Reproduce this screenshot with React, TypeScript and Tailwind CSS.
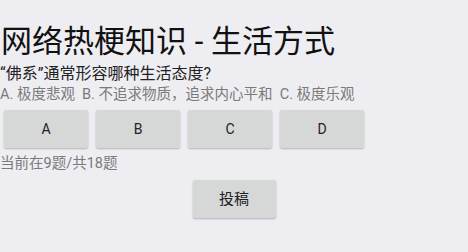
import React from "react";

const font = "font-['Roboto','Noto_Sans_CJK_SC',sans-serif]";

function Btn({ label, className = "" }: { label: string; className?: string }) {
  return (
    <button
      className={`h-[38px] rounded-[2px] bg-[#d6d7d7] shadow-[0_1px_2px_rgba(0,0,0,0.25)] text-[14px] text-[#222] ${className}`}
    >
      {label}
    </button>
  );
}

export default function App() {
  const opts = ["A", "B", "C", "D"];
  return (
    <div className={`w-[468px] h-[252px] bg-[#eeedf2] overflow-hidden ${font}`}>
      <h1 className="mt-[26px] pl-[1px] text-[31px] leading-[32px] text-[#111]">网络热梗知识 - 生活方式</h1>
      <p className="mt-[6px] text-[16px] leading-[20px] text-[#222]">“佛系”通常形容哪种生活态度?</p>
      <p className="mt-[2px] text-[14.5px] leading-[18px] text-[#7a7a7a] whitespace-pre">
        A. 极度悲观  B. 不追求物质，追求内心平和  C. 极度乐观
      </p>
      <div className="mt-[6px] ml-[4px] flex gap-[8px]">
        {opts.map((o) => (
          <Btn key={o} label={o} className="w-[84px]" />
        ))}
      </div>
      <p className="mt-[7px] text-[14.5px] leading-[18px] text-[#7a7a7a]">当前在9题/共18题</p>
      <div className="mt-[7px] flex justify-center">
        <Btn label="投稿" className="w-[83px] h-[37px] text-[15px]" />
      </div>
    </div>
  );
}
